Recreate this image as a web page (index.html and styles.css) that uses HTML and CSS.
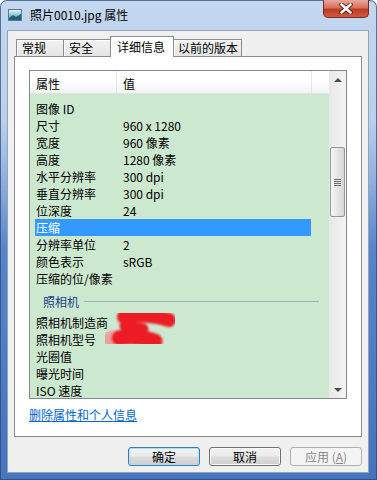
FILE: index.html
```html
<!DOCTYPE html>
<html lang="zh-CN">
<head>
  <meta charset="UTF-8">
  <title>照片0010.jpg 属性</title>
  <link rel="stylesheet" href="styles.css">
</head>
<body>
  <div class="window">
    <div class="titlebar">
      <svg class="app-icon" width="14" height="12" viewBox="0 0 14 12">
        <defs>
          <linearGradient id="sky" x1="0" y1="0" x2="0" y2="1">
            <stop offset="0" stop-color="#eaf6fb"/>
            <stop offset="0.5" stop-color="#8fc6dc"/>
            <stop offset="1" stop-color="#2f7f8f"/>
          </linearGradient>
        </defs>
        <rect x="0.5" y="0.5" width="13" height="11" fill="url(#sky)" stroke="#5a7d94"/>
        <path d="M1 9 L5 6 L8 8 L13 5 L13 11 L1 11 Z" fill="#1f6470"/>
      </svg>
      <span class="title">照片0010.jpg 属性</span>
      <div class="close">
        <svg width="14" height="11" viewBox="0 0 14 11">
          <path d="M2.5 1.5 L11.5 9.5 M11.5 1.5 L2.5 9.5" stroke="#5a1a12" stroke-width="4.4" stroke-linecap="round"/>
          <path d="M2.5 1.5 L11.5 9.5 M11.5 1.5 L2.5 9.5" stroke="#fff" stroke-width="2.6" stroke-linecap="round"/>
        </svg>
      </div>
    </div>

    <div class="client">
      <div class="tabs">
        <div class="tab t1">常规</div>
        <div class="tab t2">安全</div>
        <div class="tab t3 active">详细信息</div>
        <div class="tab t4">以前的版本</div>
      </div>

      <div class="panel">
        <div class="list">
          <div class="list-body">
            <div class="header">
              <div class="hcell name-col">属性</div>
              <div class="hcell value-col">值</div>
            </div>
            <div class="rows">
              <div class="row"><span class="name">图像 ID</span><span class="value"></span></div>
              <div class="row"><span class="name">尺寸</span><span class="value">960 x 1280</span></div>
              <div class="row"><span class="name">宽度</span><span class="value">960 像素</span></div>
              <div class="row"><span class="name">高度</span><span class="value">1280 像素</span></div>
              <div class="row"><span class="name">水平分辨率</span><span class="value">300 dpi</span></div>
              <div class="row"><span class="name">垂直分辨率</span><span class="value">300 dpi</span></div>
              <div class="row"><span class="name">位深度</span><span class="value">24</span></div>
              <div class="row selected"><span class="name">压缩</span><span class="value"></span></div>
              <div class="row"><span class="name">分辨率单位</span><span class="value">2</span></div>
              <div class="row"><span class="name">颜色表示</span><span class="value">sRGB</span></div>
              <div class="row"><span class="name">压缩的位/像素</span><span class="value"></span></div>
              <div class="group"><span>照相机</span><i class="group-line"></i></div>
              <div class="row"><span class="name">照相机制造商</span><span class="value"></span></div>
              <div class="row"><span class="name">照相机型号</span><span class="value"></span></div>
              <div class="row"><span class="name">光圈值</span><span class="value"></span></div>
              <div class="row"><span class="name">曝光时间</span><span class="value"></span></div>
              <div class="row"><span class="name">ISO 速度</span><span class="value"></span></div>
            </div>

            <!-- red marker over the camera maker / model values -->
            <svg class="scribble" width="75" height="50" viewBox="0 0 75 50">
              <defs>
                <filter id="soft"><feGaussianBlur stdDeviation="0.9"/></filter>
              </defs>
              <g filter="url(#soft)" fill="none" stroke-linecap="round">
                <path d="M6 34 L14 33" stroke="#f3898c" stroke-width="16" opacity="0.75"/>
                <path d="M14 33 Q 32 30 50 36" stroke="#ec1f27" stroke-width="15"/>
                <path d="M19 12 Q 40 8 64 15" stroke="#ec1f27" stroke-width="14"/>
                <path d="M20 21 L 38 24" stroke="#ec1f27" stroke-width="11"/>
              </g>
            </svg>
          </div>

          <div class="scrollbar">
            <div class="sb-btn"><i class="arrow-up"></i></div>
            <div class="sb-track">
              <div class="thumb"><i class="grip"></i></div>
            </div>
            <div class="sb-btn"><i class="arrow-down"></i></div>
          </div>
        </div>

        <a class="link" href="#">删除属性和个人信息</a>
      </div>

      <div class="buttons">
        <button class="btn default">确定</button>
        <button class="btn">取消</button>
        <button class="btn disabled">应用 (<u>A</u>)</button>
      </div>
    </div>
  </div>
</body>
</html>
```

FILE: styles.css
```css
body { margin: 0; background: #fff; font-family: "Noto Sans CJK SC", "Liberation Sans", sans-serif; font-size: 12px; color: #000; }

.window {
  width: 377px; height: 480px; box-sizing: border-box;
  padding: 0 8px 7px 7px;
  display: flex; flex-direction: column;
  border-radius: 7px 7px 0 0;
  background: linear-gradient(#c3d7ef 0%, #bad0eb 25%, #8eaedc 38%, #5784c8 52%, #4674bd 100%);
  box-shadow: inset 0 0 0 1px rgba(40, 70, 120, 0.7);
}

.titlebar { height: 30px; display: flex; align-items: flex-start; }
.app-icon { margin: 9px 0 0 1px; }
.title { margin-left: 8px; line-height: 30px; }
.close {
  margin-left: auto; width: 46px; height: 18px; box-sizing: border-box;
  display: flex; align-items: center; justify-content: center;
  border: 1px solid #7b2a20; border-top: none; border-radius: 0 0 5px 5px;
  background: linear-gradient(#e9a89c 0%, #d8705e 45%, #c13a26 55%, #cf5a3e 100%);
}

.client {
  flex: 1; display: flex; flex-direction: column;
  background: #f0f0f0; border: 1px solid #8fa4bf;
  padding: 5px 6px 0 6px;
}

.tabs { display: flex; height: 20px; margin-left: 2px; align-items: flex-end; position: relative; z-index: 1; }
.tab {
  box-sizing: border-box; height: 17px; line-height: 15px; padding-left: 5px;
  border: 1px solid #898c95; border-bottom: none;
  background: linear-gradient(#f3f3f3, #e4e4e4);
  box-shadow: inset 1px 1px 0 #fff;
  margin-left: -1px;
}
.t1 { width: 48px; margin-left: 0; }
.t2 { width: 48px; }
.t3 { width: 64px; }
.t4 { width: 69px; padding-left: 4px; }
.tab.active { height: 21px; line-height: 20px; margin-bottom: -1px; background: #fff; box-shadow: none; padding-left: 6px; }

.panel {
  height: 381px; box-sizing: border-box;
  background: #fff; border: 1px solid #898c95;
  padding: 13px 14px 0 14px;
}

.list { height: 329px; box-sizing: border-box; border: 1px solid #828790; display: flex; background: #cce8cf; }
.list-body { flex: 1; position: relative; overflow: hidden; }

.header {
  height: 23px; box-sizing: border-box; display: flex;
  background: linear-gradient(#fff 45%, #f2f3f5 100%);
  border-bottom: 1px solid #dfe3e8;
}
.hcell { padding: 3px 0 0 6px; line-height: 19px; box-sizing: border-box; border-right: 1px solid #e3e5e8; }
.hcell.name-col { width: 87px; }
.hcell.value-col { width: 195px; }

.rows { padding-top: 6px; }
.row { display: grid; grid-template-columns: 81px 1fr; width: 276px; margin-left: 5px; height: 17px; line-height: 17px; }
.row .name { padding-left: 1px; white-space: nowrap; }
.row .value { padding-left: 7px; white-space: nowrap; }
.row.selected { background: #3399ff; color: #fff; }

.group { display: flex; align-items: center; height: 27px; box-sizing: border-box; padding: 6px 10px 4px 13px; line-height: 17px; color: #1e3c8e; }
.group-line { flex: 1; height: 1px; background: #9fb0bd; margin-left: 5px; }

.scribble { position: absolute; left: 75px; top: 234px; }

.scrollbar { width: 17px; display: flex; flex-direction: column; background: linear-gradient(90deg, #e8e8e8, #f4f4f4); }
.sb-btn { height: 17px; display: flex; align-items: center; justify-content: center; }
.arrow-up { border: 4px solid transparent; border-top: none; border-bottom: 4px solid #4a4a4a; }
.arrow-down { border: 4px solid transparent; border-bottom: none; border-top: 4px solid #4a4a4a; }
.sb-track { flex: 1; padding-top: 59px; }
.thumb {
  width: 15px; height: 70px; box-sizing: border-box; margin-left: 1px;
  border: 1px solid #979797; border-radius: 2px;
  background: linear-gradient(90deg, #f6f6f6, #e6e6e6 50%, #d6d6d6);
  display: flex; align-items: center; justify-content: center;
}
.grip { width: 7px; height: 7px; background: repeating-linear-gradient(#6d6d6d 0 1px, transparent 1px 2px); }

.link { display: inline-block; margin-top: 7px; line-height: 17px; color: #0066cc; text-decoration: underline; }

.buttons { display: flex; justify-content: flex-end; gap: 9px; margin: 10px 0 0 0; }
.btn {
  width: 72px; height: 19px; padding: 0; box-sizing: border-box;
  font: inherit; line-height: 16px; color: #000;
  border: 1px solid #707070; border-radius: 3px;
  background: linear-gradient(#f2f2f2 0%, #ebebeb 48%, #dddddd 52%, #cfcfcf 100%);
  box-shadow: inset 0 0 0 1px #fbfbfb;
}
.btn.default { border-color: #3c7fb1; box-shadow: inset 0 0 0 1px #a9def6; }
.btn.disabled { color: #8a8a8a; border-color: #adb2b5; background: #f4f4f4; box-shadow: none; }
```
